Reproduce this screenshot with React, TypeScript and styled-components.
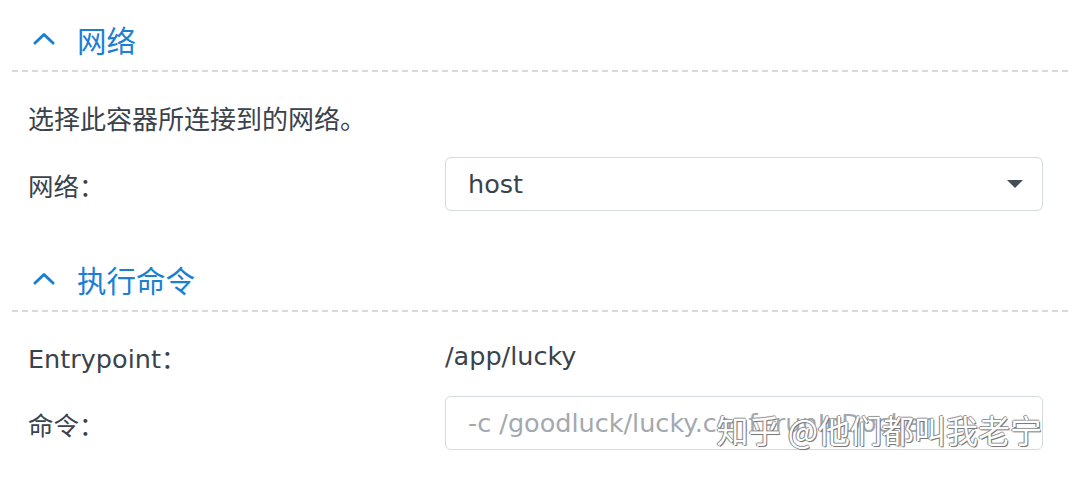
import React from "react";
import styled, { createGlobalStyle } from "styled-components";

const colors = {
  text: "#3a434c",
  blue: "#1b7fd4",
  border: "#d3dae0",
  dash: "#d9d9d9",
  placeholder: "#a3a9af",
};

const GlobalStyle = createGlobalStyle`
  body {
    margin: 0;
    background: #ffffff;
    font-family: "DejaVu Sans", "Noto Sans CJK SC", sans-serif;
    color: ${colors.text};
  }
`;

const ChevronUp = () => (
  <svg width="22" height="13" viewBox="0 0 22 13" fill="none">
    <polyline
      points="2,11 11,2.5 20,11"
      stroke={colors.blue}
      strokeWidth="3"
      strokeLinecap="round"
      strokeLinejoin="round"
    />
  </svg>
);

const Section = ({
  title,
  children,
  spacing,
}: {
  title: string;
  children: React.ReactNode;
  spacing: number;
}) => (
  <SectionWrap>
    <SectionHeader>
      <ChevronUp />
      <SectionTitle>{title}</SectionTitle>
    </SectionHeader>
    <Divider />
    <SectionBody $spacing={spacing}>{children}</SectionBody>
  </SectionWrap>
);

const App = () => {
  return (
    <Page>
      <GlobalStyle />
      <Section title="网络" spacing={32}>
        <Description>选择此容器所连接到的网络。</Description>
        <Row $gap={25}>
          <Label>网络：</Label>
          <Select>
            <span>host</span>
            <Caret />
          </Select>
        </Row>
      </Section>
      <Section title="执行命令" spacing={17}>
        <Row $gap={0}>
          <Label>Entrypoint：</Label>
          <Value>/app/lucky</Value>
        </Row>
        <Row $gap={13}>
          <Label>命令：</Label>
          <Input>-c /goodluck/lucky.conf -runInDocker</Input>
        </Row>
      </Section>
      <Watermark>知乎 @他们都叫我老宁</Watermark>
    </Page>
  );
};

export default App;

const Page = styled.div`
  position: relative;
  width: 1068px;
  height: 482px;
  padding: 11px 0 0 12px;
  box-sizing: border-box;
  overflow: hidden;
`;

const SectionWrap = styled.section`
  & + & {
    margin-top: 40px;
  }
`;

const SectionHeader = styled.div`
  display: flex;
  align-items: center;
  height: 59px;
  padding: 0 0 4px 21px;
  box-sizing: border-box;
`;

const SectionTitle = styled.h2`
  margin: 0 0 0 22px;
  font-family: "Noto Sans CJK SC", sans-serif;
  font-size: 29.5px;
  font-weight: 400;
  color: ${colors.blue};
`;

const Divider = styled.div`
  height: 2px;
  background: repeating-linear-gradient(
    to right,
    ${colors.dash} 0 6px,
    transparent 6px 10px
  );
`;

const SectionBody = styled.div<{ $spacing: number }>`
  padding: ${(p) => p.$spacing}px 25px 0 16px;
`;

const Description = styled.p`
  margin: 0;
  font-family: "Noto Sans CJK SC", sans-serif;
  font-size: 26px;
  line-height: 28px;
`;

const Row = styled.div<{ $gap: number }>`
  display: flex;
  align-items: center;
  height: 54px;
  margin-top: ${(p) => p.$gap}px;
`;

const Label = styled.div`
  width: 417px;
  flex-shrink: 0;
  font-size: 25.5px;
`;

const Value = styled.div`
  font-size: 25.5px;
`;

const Select = styled.div`
  flex: 1;
  height: 54px;
  box-sizing: border-box;
  border: 1.5px solid ${colors.border};
  border-radius: 6px;
  display: flex;
  align-items: center;
  justify-content: space-between;
  padding: 0 19px 0 22px;
  font-size: 25.5px;
`;

const Caret = styled.span`
  width: 0;
  height: 0;
  border-left: 8px solid transparent;
  border-right: 8px solid transparent;
  border-top: 8px solid #454d55;
`;

const Input = styled.div`
  flex: 1;
  height: 54px;
  box-sizing: border-box;
  border: 1.5px solid ${colors.border};
  border-radius: 6px;
  display: flex;
  align-items: center;
  padding: 0 22px;
  font-size: 25.5px;
  color: ${colors.placeholder};
  white-space: nowrap;
  overflow: hidden;
`;

const Watermark = styled.div`
  position: absolute;
  right: 26px;
  top: 406px;
  font-family: "Noto Sans CJK SC", sans-serif;
  font-size: 32px;
  color: #ffffff;
  text-shadow: 1px 1px 0 #7a7a7a, -1px 0 0 #8a8a8a, 0 -1px 0 #9a9a9a, 0 0 2px #777777;
  white-space: nowrap;
`;
